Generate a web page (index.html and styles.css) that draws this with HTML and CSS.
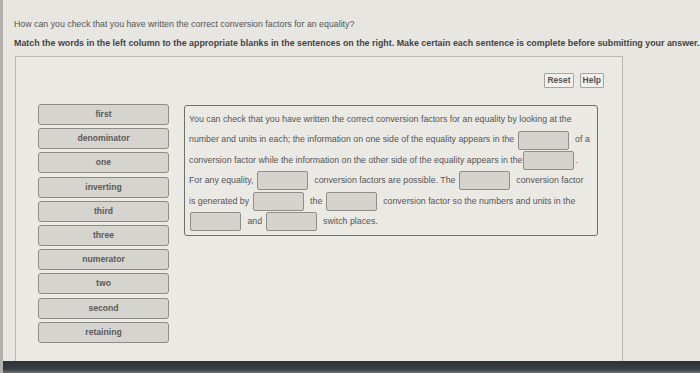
FILE: index.html
```
<!DOCTYPE html>
<html lang="en">
<head>
    <meta charset="UTF-8">
    <meta name="viewport" content="width=device-width, initial-scale=1.0">
    <title>Conversion Factors</title>
    <link rel="stylesheet" href="styles.css">
</head>
<body>

<div class="page">
    <div class="question">
        <p class="prompt">How can you check that you have written the correct conversion factors for an equality?</p>
        <p class="instructions">Match the words in the left column to the appropriate blanks in the sentences on the right. Make certain each sentence is complete before submitting your answer.</p>
    </div>

    <div class="panel">
        <div class="toolbar">
            <button class="tool-btn">Reset</button>
            <button class="tool-btn">Help</button>
        </div>

        <div class="match-area">
            <div class="word-bank">
                <div class="word">first</div>
                <div class="word">denominator</div>
                <div class="word">one</div>
                <div class="word">inverting</div>
                <div class="word">third</div>
                <div class="word">three</div>
                <div class="word">numerator</div>
                <div class="word">two</div>
                <div class="word">second</div>
                <div class="word">retaining</div>
            </div>

            <div class="sentences">
                <div class="line">You can check that you have written the correct conversion factors for an equality by looking at the</div>
                <div class="line">number and units in each; the information on one side of the equality appears in the <span class="blank"></span> of a</div>
                <div class="line">conversion factor while the information on the other side of the equality appears in the<span class="blank tight"></span>.</div>
                <div class="line">For any equality, <span class="blank"></span> conversion factors are possible. The <span class="blank"></span> conversion factor</div>
                <div class="line">is generated by <span class="blank"></span> the <span class="blank"></span> conversion factor so the numbers and units in the</div>
                <div class="line"><span class="blank"></span> and <span class="blank"></span> switch places.</div>
            </div>
        </div>
    </div>
</div>

<div class="taskbar"></div>

</body>
</html>
```

FILE: styles.css
```
html, body {
    margin: 0;
    padding: 0;
}

body {
    font-family: "Liberation Sans", Arial, sans-serif;
    background-color: #e8e6e1;
    color: #4d4d4d;
    width: 700px;
    height: 373px;
    overflow: hidden;
    display: flex;
    flex-direction: column;
    border-left: 3px solid #b3b2ae;
    box-sizing: border-box;
}

.page {
    flex: 1;
    display: flex;
    flex-direction: column;
    min-height: 0;
}

.question {
    padding: 19px 0 0 11px;
    white-space: nowrap;
}

.question p {
    margin: 0;
    font-size: 8.8px;
    line-height: 11px;
}

.prompt {
    color: #555;
}

.instructions {
    margin-top: 8px !important;
    font-weight: bold;
    color: #444;
    font-size: 8.9px !important;
}

.panel {
    flex: 1;
    margin: 7px 0 0 12px;
    width: 606px;
    border: 1px solid #b9b7b2;
    border-bottom: none;
    background-color: #ebe9e4;
    padding-top: 16px;
}

.toolbar {
    display: flex;
    justify-content: flex-end;
    gap: 6px;
    padding-right: 18px;
}

.tool-btn {
    font-family: inherit;
    font-size: 8.5px;
    font-weight: bold;
    color: #555;
    background-color: #f1f0ec;
    border: 1px solid #a5a4a0;
    border-radius: 1px;
    padding: 0 2px;
    height: 15px;
    line-height: 13px;
}

.match-area {
    display: flex;
    align-items: flex-start;
    margin-top: 16px;
    padding-left: 22px;
}

.word-bank {
    width: 131px;
    display: flex;
    flex-direction: column;
    gap: 3.2px;
}

.word {
    height: 19px;
    line-height: 19px;
    text-align: center;
    font-size: 8.6px;
    font-weight: bold;
    color: #595959;
    background-color: #d6d4cf;
    border: 1px solid #8d8c89;
    border-radius: 3px;
}

.sentences {
    margin: 1px 0 0 15px;
    width: 404px;
    border: 1.5px solid #6e6e6c;
    border-radius: 3px;
    padding: 3px 4px 4px 4px;
    font-size: 8.8px;
    color: #555;
}

.line {
    height: 20.4px;
    line-height: 20.4px;
    white-space: nowrap;
}

.blank {
    display: inline-block;
    width: 51px;
    height: 19px;
    vertical-align: middle;
    margin: 0 4px 0 1px;
    background-color: #d5d3ce;
    border: 1px solid #8f8e8b;
    border-radius: 2px;
    box-sizing: border-box;
}

.blank.tight {
    margin-left: 0;
    margin-right: 2px;
}

.taskbar {
    height: 12px;
    background: linear-gradient(#2e3237, #3a3f45 70%, #6f767c);
}
```
